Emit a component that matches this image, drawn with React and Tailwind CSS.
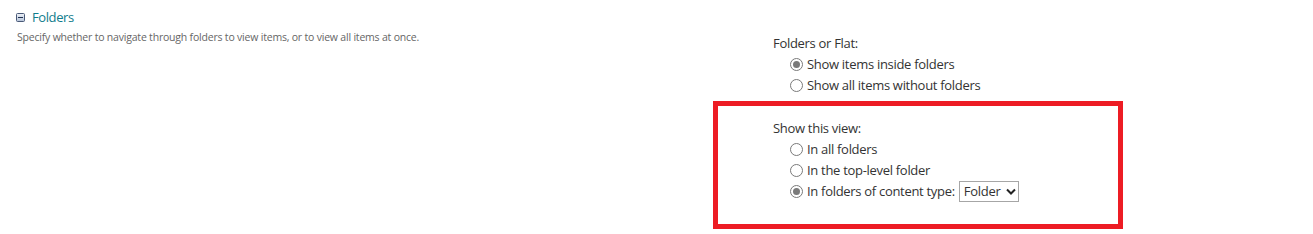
import React from 'react';

const FONT = { fontFamily: '"Open Sans", "Noto Sans", sans-serif' };

function Radio({ checked, label, children }) {
  return (
    <div className="flex items-center h-[21px]">
      <span className="w-[13px] h-[13px] rounded-full border border-[#7a7a7a] bg-white flex items-center justify-center shrink-0">
        {checked && <span className="w-[7px] h-[7px] rounded-full bg-[#7a7a7a]" />}
      </span>
      <span className="ml-[4px] text-[13px] tracking-[-0.3px] text-[#333] whitespace-nowrap">{label}</span>
      {children}
    </div>
  );
}

export default function App() {
  return (
    <div className="w-[1313px] h-[234px] bg-white relative" style={FONT}>
      <div className="flex">
        {/* Left: section title + description */}
        <div className="w-[713px] shrink-0 pl-[16px] pt-[7px]">
          <div className="flex items-center h-[20px]">
            <svg width="9" height="9" viewBox="0 0 9 9" className="shrink-0">
              <defs>
                <linearGradient id="g" x1="0" y1="0" x2="0" y2="1">
                  <stop offset="0" stopColor="#eef2f8" />
                  <stop offset="1" stopColor="#b5c3d8" />
                </linearGradient>
              </defs>
              <rect x="0.5" y="0.5" width="8" height="8" rx="1" fill="url(#g)" stroke="#4a5a78" />
              <rect x="2" y="4" width="5" height="1" fill="#1f2f4f" />
            </svg>
            <span className="ml-[7px] text-[13px] tracking-[-0.4px] text-[#0f7c8c] leading-none">Folders</span>
          </div>
          <div className="mt-[3px] pl-[1px] text-[10.5px] tracking-[-0.2px] text-[#666] whitespace-nowrap">
            Specify whether to navigate through folders to view items, or to view all items at once.
          </div>
        </div>

        {/* Right: options */}
        <div className="flex flex-col">
          <div className="pl-[60px] pt-[33px]">
            <div className="text-[13px] tracking-[-0.3px] text-[#333] h-[21px] leading-[21px]">Folders or Flat:</div>
            <div className="pl-[17px]">
              <Radio checked label="Show items inside folders" />
              <Radio label="Show all items without folders" />
            </div>
          </div>
          <div className="mt-[5px] w-[410px] h-[128px] border-[5px] border-[#ed1c24] pl-[55px] pt-[12px]">
            <div className="text-[13px] tracking-[-0.3px] text-[#333] h-[21px] leading-[21px]">Show this view:</div>
            <div className="pl-[17px]">
              <Radio label="In all folders" />
              <Radio label="In the top-level folder" />
              <Radio checked label="In folders of content type:">
                <span className="ml-[4px] h-[21px] w-[60px] border border-[#a6a6a6] flex items-center pl-[4px] text-[13px] tracking-[-0.3px] text-[#333]">
                  Folder
                  <svg width="10" height="7" viewBox="0 0 10 7" className="ml-[6px]">
                    <path d="M1 1.5 L5 5.5 L9 1.5" fill="none" stroke="#222" strokeWidth="2" />
                  </svg>
                </span>
              </Radio>
            </div>
          </div>
        </div>
      </div>
    </div>
  );
}
